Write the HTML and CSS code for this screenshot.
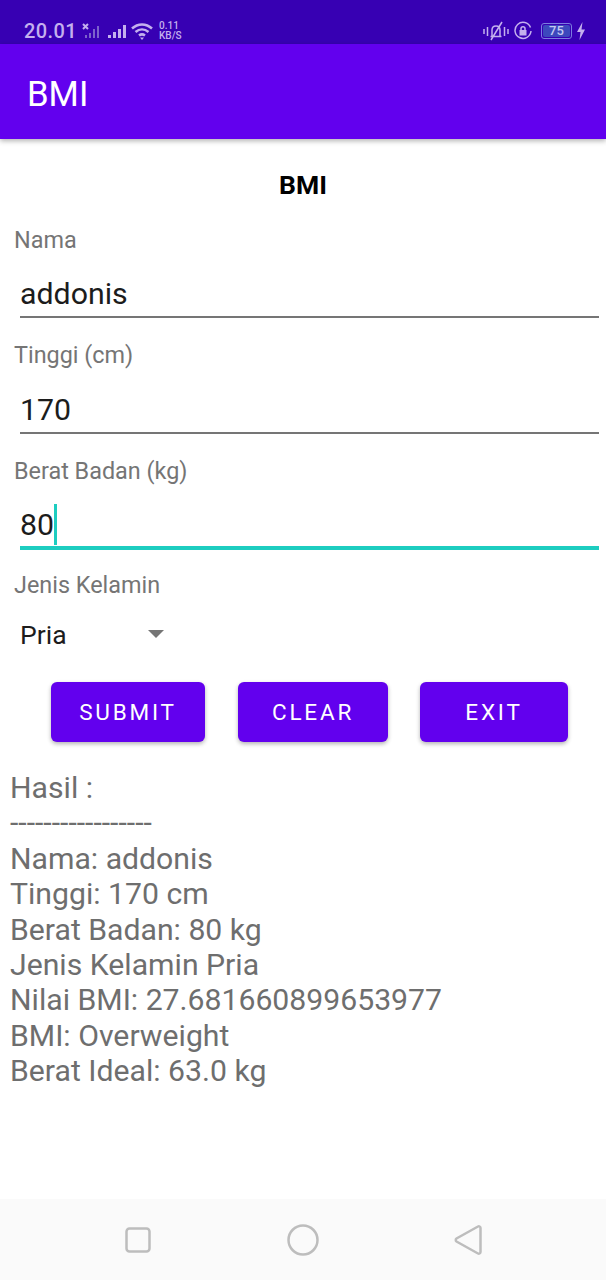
FILE: index.html
```html
<!DOCTYPE html>
<html lang="id">
<head>
    <meta charset="UTF-8">
    <title>BMI</title>
    <link rel="stylesheet" href="styles.css">
</head>
<body>
    <div class="phone">
        <div class="status-bar">
            <div class="status-left">
                <span class="clock">20.01</span>
                <svg class="sig" width="22" height="20" viewBox="0 0 22 20">
                    <path class="dim" d="M3 14h2v3H3zM7 12h2v5H7zM11 8h2v9h-2zM15 5h2v12h-2z"/>
                    <path class="x" d="M1 3l5 5M6 3l-5 5"/>
                </svg>
                <svg class="sig" width="20" height="20" viewBox="0 0 20 20">
                    <path class="bright" d="M1 14h3v3H1zM6 11h3v6H6zM11 8h3v9h-3zM16 4h3v13h-3z"/>
                </svg>
                <svg class="wifi" width="24" height="20" viewBox="0 0 24 20">
                    <path class="wave" d="M2 7.500c6-5.500 14-5.500 20 0M5.500 11c4-3.500 9-3.500 13 0M9 14.500c2-1.500 4-1.500 6 0"/>
                    <path class="bright" d="M10 16.500h4l-2 2.500z"/>
                </svg>
                <span class="speed"><span>0.11</span><span>KB/S</span></span>
            </div>
            <div class="status-right">
                <svg width="26" height="20" viewBox="0 0 26 20">
                    <path class="line" d="M1 8v5M4.500 6v9M21.500 6v9M25 8v5"/>
                    <path class="line" d="M7.500 15.500h11M9 15.500V9c0-5.500 8-5.500 8 0v6.500M19 1L8 19"/>
                </svg>
                <svg width="20" height="20" viewBox="0 0 20 20">
                    <path class="line" d="M17.500 6.500A8 8 0 1 0 18 10"/>
                    <path class="bright" d="M6.500 9h7v5.500h-7z"/>
                    <path class="line" d="M8 9V7.500c0-2.500 4-2.500 4 0V9"/>
                </svg>
                <span class="battery"><span class="battery-level">75</span></span>
                <svg width="10" height="20" viewBox="0 0 10 20">
                    <path class="bright" d="M6.500 1L1 11h3.500L3.500 19 9 8.500H5.500z"/>
                </svg>
            </div>
        </div>

        <div class="app-bar">BMI</div>

        <main class="content">
            <h1 class="page-title">BMI</h1>

            <label class="field-label field-label-first">Nama</label>
            <div class="field">addonis</div>

            <label class="field-label">Tinggi (cm)</label>
            <div class="field">170</div>

            <label class="field-label">Berat Badan (kg)</label>
            <div class="field field-focus">80<span class="caret"></span></div>

            <label class="field-label">Jenis Kelamin</label>
            <div class="spinner">
                <span class="spinner-value">Pria</span>
                <span class="spinner-arrow"></span>
            </div>

            <div class="buttons">
                <button class="btn btn-submit">Submit</button>
                <button class="btn btn-clear">Clear</button>
                <button class="btn btn-exit">Exit</button>
            </div>

            <div class="result">
                <p>Hasil :</p>
                <p class="dashes">-----------------</p>
                <p>Nama: addonis</p>
                <p>Tinggi: 170 cm</p>
                <p>Berat Badan: 80 kg</p>
                <p>Jenis Kelamin Pria</p>
                <p>Nilai BMI: 27.681660899653977</p>
                <p>BMI: Overweight</p>
                <p>Berat Ideal: 63.0 kg</p>
            </div>
        </main>

        <div class="nav-bar">
            <svg width="26" height="26" viewBox="0 0 26 26">
                <rect class="nav-icon" x="1.500" y="1.500" width="23" height="23" rx="3"/>
            </svg>
            <svg width="32" height="32" viewBox="0 0 32 32">
                <circle class="nav-icon" cx="16" cy="16" r="14.500"/>
            </svg>
            <svg width="28" height="30" viewBox="0 0 28 30">
                <path class="nav-icon" d="M24 1.500c1-.5 2.500 0 2.500 1.500v24c0 1.500-1.500 2-2.500 1.500L2.500 16.500c-1-.7-1-2.300 0-3z"/>
            </svg>
        </div>
    </div>
</body>
</html>
```

FILE: styles.css
```css
body {
    margin: 0;
    background-color: white;
    font-family: Roboto, 'Liberation Sans', sans-serif;
}
.phone {
    width: 606px;
    height: 1280px;
    display: flex;
    flex-direction: column;
    overflow: hidden;
}
.status-bar {
    height: 44px;
    background-color: #3700b3;
    display: flex;
    justify-content: space-between;
    align-items: center;
    padding: 0 20px 0 24px;
    box-sizing: border-box;
    color: #c4b0ee;
}
.status-left, .status-right {
    display: flex;
    align-items: center;
    padding-top: 18px;
}
.status-left {
    gap: 3px;
}
.status-right {
    gap: 4px;
}
.clock {
    font-size: 20px;
    font-weight: 500;
    letter-spacing: 0.4px;
    margin-right: 2px;
}
.speed {
    display: flex;
    flex-direction: column;
    font-size: 10px;
    line-height: 10px;
    font-weight: 500;
    margin-left: 2px;
}
.dim {
    fill: #7c62cc;
}
.bright {
    fill: #c4b0ee;
}
.x, .line, .wave {
    fill: none;
    stroke: #c4b0ee;
    stroke-width: 2;
}
.line {
    stroke-width: 1.500;
}
.wave {
    stroke-width: 2.500;
}
.battery {
    width: 31px;
    height: 16px;
    box-sizing: border-box;
    border: 1px solid #7c7ce0;
    border-radius: 3px;
    padding: 1px;
    display: flex;
    margin-left: 4px;
}
.battery-level {
    flex: 1;
    background-color: #3d48bd;
    border-radius: 2px;
    font-size: 13px;
    line-height: 12px;
    font-weight: 500;
    text-align: center;
    color: #c4c8f0;
}
.app-bar {
    height: 95px;
    background-color: #6200ee;
    color: white;
    font-size: 34.700px;
    line-height: 100px;
    padding-left: 27px;
    box-shadow: 0 2px 5px rgba(0,0,0,0.3);
    position: relative;
}
.content {
    flex: 1;
    display: flex;
    flex-direction: column;
}
.page-title {
    font-size: 26.500px;
    font-weight: 700;
    color: black;
    text-align: center;
    margin: 31px 0 0;
    line-height: 30px;
}
.field-label {
    display: block;
    font-size: 23.400px;
    line-height: 26px;
    color: #757575;
    margin: 24px 0 0 14px;
}
.field-label-first {
    margin-top: 27px;
}
.field {
    margin: 19px 7px 0 20px;
    height: 47px;
    box-sizing: border-box;
    padding-top: 6px;
    font-size: 30.300px;
    line-height: 34px;
    color: #1c1c1c;
    border-bottom: 2px solid #757575;
    display: flex;
}
.field-label-first + .field {
    margin-top: 18px;
}
.field-focus {
    height: 49px;
    margin-top: 17px;
    padding-top: 6px;
    border-bottom: 4px solid #1dcdc0;
    line-height: 36px;
    margin-bottom: -2px;
}
.caret {
    width: 3px;
    height: 41px;
    background-color: #1dcdc0;
    margin-top: -3px;
}
.spinner {
    display: flex;
    align-items: center;
    height: 48px;
    margin: 12px 0 0 20px;
}
.spinner-value {
    font-size: 26.500px;
    color: #1c1c1c;
    width: 128px;
}
.spinner-arrow {
    border-left: 8px solid transparent;
    border-right: 8px solid transparent;
    border-top: 8px solid #757575;
}
.buttons {
    display: flex;
    margin: 24px 0 0 51px;
}
.btn {
    height: 60px;
    background-color: #6200ee;
    color: white;
    border: none;
    border-radius: 6px;
    font-family: inherit;
    font-size: 22.500px;
    font-weight: 400;
    letter-spacing: 2.800px;
    text-transform: uppercase;
    padding: 0;
    box-shadow: 0 2px 4px rgba(0,0,0,0.3);
}
.btn-submit {
    width: 154px;
    margin-right: 33px;
}
.btn-clear {
    width: 150px;
    margin-right: 32px;
}
.btn-exit {
    width: 148px;
}
.result {
    margin: 28px 0 0 10px;
    font-size: 30.200px;
    line-height: 35.400px;
    color: #6e6e6e;
}
.result p {
    margin: 0;
}
.nav-bar {
    height: 81px;
    background-color: #fafafa;
    display: flex;
    align-items: center;
    justify-content: space-between;
    padding: 0 124px 0 125px;
    margin-top: auto;
}
.nav-icon {
    fill: none;
    stroke: #bdbdbd;
    stroke-width: 2.500;
}
```
